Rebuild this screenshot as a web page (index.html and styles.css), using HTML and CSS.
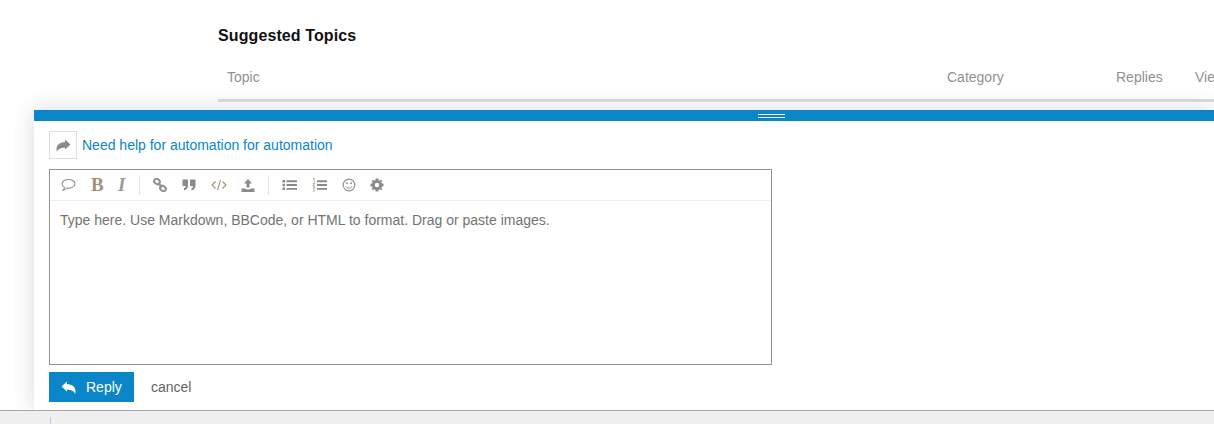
FILE: index.html
```html
<!DOCTYPE html>
<html lang="en">
  <head>
    <meta charset="UTF-8" />
    <title>Need help for automation for automation</title>
    <link rel="stylesheet" href="styles.css">
  </head>
  <body>
    <section class="suggested">
      <h3>Suggested Topics</h3>
      <div class="topic-head">
        <span class="col-topic">Topic</span>
        <span class="col-category">Category</span>
        <span class="col-replies">Replies</span>
        <span class="col-views">Views</span>
      </div>
    </section>

    <div class="composer">
      <div class="composer-grip"><span class="grippie"></span></div>
      <div class="composer-body">
        <div class="reply-to">
          <span class="reply-box">
            <svg width="15" height="13" viewBox="0 0 15 13"><path d="M14.500 5.500 9 0.500V3.200C4 3.200 0.500 5.500 0.500 10.500 0.500 11.500 0.800 12.300 1 13 1.500 10.500 4 8.800 9 8.800V10.500Z" fill="#8a8a8a"/></svg>
          </span>
          <a class="topic-link" href="#">Need help for automation for automation</a>
        </div>
        <div class="editor">
          <div class="toolbar">
            <svg class="tool tool-bubble" width="15" height="14" viewBox="0 0 15 14"><path d="M7.500 1.500C3.900 1.500 1 3.300 1 5.800 1 7.300 2 8.500 3.500 9.300 3.400 10.500 2.700 11.500 2 12.300 3.500 12.100 4.800 11.300 5.800 10 6.400 10.100 6.900 10.100 7.500 10.100 11.100 10.100 14 8.200 14 5.800S11.100 1.500 7.500 1.500Z" fill="none" stroke="#919191" stroke-width="1.100"/></svg>
            <span class="tool tool-b">B</span>
            <span class="tool tool-i">I</span>
            <span class="divider"></span>
            <svg class="tool" width="14" height="14" viewBox="0 0 14 14"><g fill="none" stroke="#919191" stroke-width="2"><rect x="1" y="1.200" width="6" height="4.600" rx="2.300" transform="rotate(38 4 3.500)"/><rect x="7" y="8.200" width="6" height="4.600" rx="2.300" transform="rotate(38 10 10.500)"/><path d="M5 5 9 9"/></g></svg>
            <svg class="tool" width="14" height="12" viewBox="0 0 14 12"><path d="M0.500 0.500H6V6.500C6 9 4.500 10.800 2 11.500V9.300C3 9 3.500 8.200 3.500 7H0.500ZM8 0.500H13.500V6.500C13.500 9 12 10.800 9.500 11.500V9.300C10.500 9 11 8.200 11 7H8Z" fill="#8a8a8a"/></svg>
            <svg class="tool tool-code" width="16" height="12" viewBox="0 0 16 12"><path d="M4.500 2.500 1 6l3.500 3.500M11.500 2.500 15 6l-3.500 3.500" fill="none" stroke="#b08a5e" stroke-width="1.100"/><path d="M9.500 1 6.500 11" fill="none" stroke="#8f9ab0" stroke-width="1.100"/></svg>
            <svg class="tool tool-upload" width="14" height="13" viewBox="0 0 14 13"><path d="M7 0 11 4.500H8.500V8.500H5.500V4.500H3ZM0.500 9.500H4.500V10.300H9.500V9.500H13.500V13H0.500Z" fill="#8a8a8a"/></svg>
            <span class="divider"></span>
            <svg class="tool" width="15" height="12" viewBox="0 0 15 12"><path d="M0.500 1H3V3.500H0.500ZM0.500 4.800H3V7.300H0.500ZM0.500 8.600H3V11.100H0.500ZM4.500 1.300H15V3.200H4.500ZM4.500 5.100H15V7H4.500ZM4.500 8.900H15V10.800H4.500Z" fill="#8a8a8a"/></svg>
            <svg class="tool" width="15" height="14" viewBox="0 0 15 14"><path d="M5 2.300H15V4.200H5ZM5 6.100H15V8H5ZM5 9.900H15V11.800H5Z" fill="#8a8a8a"/><path d="M1 0.500H2.200V3.800M0.800 5.300H2.800L0.800 8H3M0.800 9.800H2.800L1.600 11.200 2.800 12.500 0.800 13.500" fill="none" stroke="#a3916f" stroke-width="0.800"/></svg>
            <svg class="tool tool-smile" width="14" height="14" viewBox="0 0 14 14"><circle cx="7" cy="7" r="5.800" fill="none" stroke="#919191" stroke-width="1.200"/><circle cx="4.900" cy="5.300" r="1" fill="#919191"/><circle cx="9.100" cy="5.300" r="1" fill="#919191"/><path d="M3.900 8.500C5 10.700 9 10.700 10.100 8.500" fill="none" stroke="#919191" stroke-width="1"/></svg>
            <svg class="tool" width="14" height="14" viewBox="0 0 14 14"><path fill-rule="evenodd" d="M5.700 0.500H8.300L8.700 2.300 9.700 2.700 11.300 1.700 12.300 2.700 11.300 4.300 11.700 5.300 13.500 5.700V8.300L11.700 8.700 11.300 9.700 12.300 11.300 11.300 12.300 9.700 11.300 8.700 11.700 8.300 13.500H5.700L5.300 11.700 4.300 11.300 2.700 12.300 1.700 11.300 2.700 9.700 2.300 8.700 0.500 8.300V5.700L2.300 5.300 2.700 4.300 1.700 2.700 2.700 1.700 4.300 2.700 5.300 2.300ZM7 4.800A2.200 2.200 0 1 0 7 9.200 2.200 2.200 0 1 0 7 4.800Z" fill="#8a8a8a"/></svg>
          </div>
          <div class="editor-input">Type here. Use Markdown, BBCode, or HTML to format. Drag or paste images.</div>
        </div>
        <div class="submit-row">
          <button class="reply-button">
            <svg width="15" height="13" viewBox="0 0 15 13"><path d="M0.500 5.500 6 0.500V3.200C11 3.200 14.500 5.500 14.500 10.500 14.500 11.500 14.200 12.300 14 13 13.500 10.500 11 8.800 6 8.800V10.500Z" fill="#ffffff"/></svg>
            Reply
          </button>
          <a class="cancel" href="#">cancel</a>
        </div>
      </div>
    </div>

    <div class="status-bar"><span class="status-tick"></span></div>
  </body>
</html>
```

FILE: styles.css
```css
html, body {
  height: 100%;
}
body {
  font-family: "Liberation Sans", Arial, sans-serif;
  background-color: #ffffff;
  margin: 0;
  overflow: hidden;
  font-size: 14px;
}
.suggested {
  margin-left: 218px;
  padding-top: 27px;
}
h3 {
  margin: 0;
  font-size: 16px;
  line-height: 18px;
  letter-spacing: 0.1px;
  color: #111111;
}
.topic-head {
  display: flex;
  width: 1100px;
  margin-top: 13px;
  height: 44px;
  box-sizing: border-box;
  padding-top: 11px;
  line-height: 16px;
  color: #919191;
  border-bottom: 3px solid #dddddd;
}
.col-topic {
  margin-left: 9px;
  width: 720px;
}
.col-category {
  width: 169px;
}
.col-replies {
  width: 79px;
}
/* composer sits over the page */
.composer {
  position: absolute;
  left: 34px;
  right: 0;
  top: 110px;
  bottom: 14px;
  background-color: #ffffff;
  box-shadow: 0 0 22px rgba(0, 0, 0, 0.15);
}
.composer-grip {
  height: 11px;
  background-color: #0a86c8;
  display: flex;
  justify-content: center;
  width: 1474px;
  box-sizing: border-box;
}
.grippie {
  display: block;
  width: 27px;
  height: 2px;
  margin-top: 4px;
  border-top: 1px solid #ffffff;
  border-bottom: 1px solid #ffffff;
}
.composer-body {
  padding: 10px 0 0 15px;
}
.reply-to {
  display: flex;
  align-items: center;
  gap: 5px;
}
.reply-box {
  width: 26px;
  height: 26px;
  border: 1px solid #dddddd;
  display: flex;
  align-items: center;
  justify-content: center;
}
.topic-link {
  color: #0a86c8;
  text-decoration: none;
}
.editor {
  width: 721px;
  height: 194px;
  margin-top: 10px;
  border: 1px solid #919191;
  display: flex;
  flex-direction: column;
}
.toolbar {
  height: 31px;
  flex-shrink: 0;
  box-sizing: border-box;
  border-bottom: 1px solid #eeeeee;
  display: flex;
  align-items: center;
  padding-left: 11px;
}
.tool {
  margin-right: 15px;
  color: #919191;
  font-family: "Liberation Serif", serif;
  font-size: 19px;
}
.tool-bubble {
  margin-right: 15px;
}
.tool-b {
  font-weight: bold;
  color: #a08f7e;
  width: 13px;
  margin-right: 14px;
}
.tool-i {
  font-style: italic;
  font-weight: bold;
  color: #a09b94;
  width: 9px;
  margin-right: 12px;
}
.tool-code {
  margin-right: 14px;
}
.tool-upload {
  margin-right: 13px;
}
.tool-smile {
  margin-right: 14px;
}
.divider {
  width: 1px;
  height: 20px;
  background-color: #e3e3e3;
  margin-right: 13px;
}
.editor-input {
  padding: 11px 10px;
  line-height: 17px;
  color: #737373;
}
.submit-row {
  display: flex;
  align-items: center;
  margin-top: 7px;
}
.reply-button {
  font-family: inherit;
  font-size: 14px;
  width: 85px;
  height: 30px;
  padding: 0 0 0 12px;
  border: none;
  background-color: #0a86c8;
  color: #ffffff;
  display: flex;
  align-items: center;
  gap: 10px;
  cursor: pointer;
}
.cancel {
  margin-left: 17px;
  color: #646464;
  text-decoration: none;
}
.status-bar {
  position: absolute;
  left: 0;
  right: 0;
  bottom: 0;
  height: 13px;
  background-color: #f0f0f0;
  border-top: 1px solid #a6a6a6;
}
.status-tick {
  position: absolute;
  left: 50px;
  bottom: 0;
  width: 1px;
  height: 7px;
  background-color: #b8c2d6;
}
```
